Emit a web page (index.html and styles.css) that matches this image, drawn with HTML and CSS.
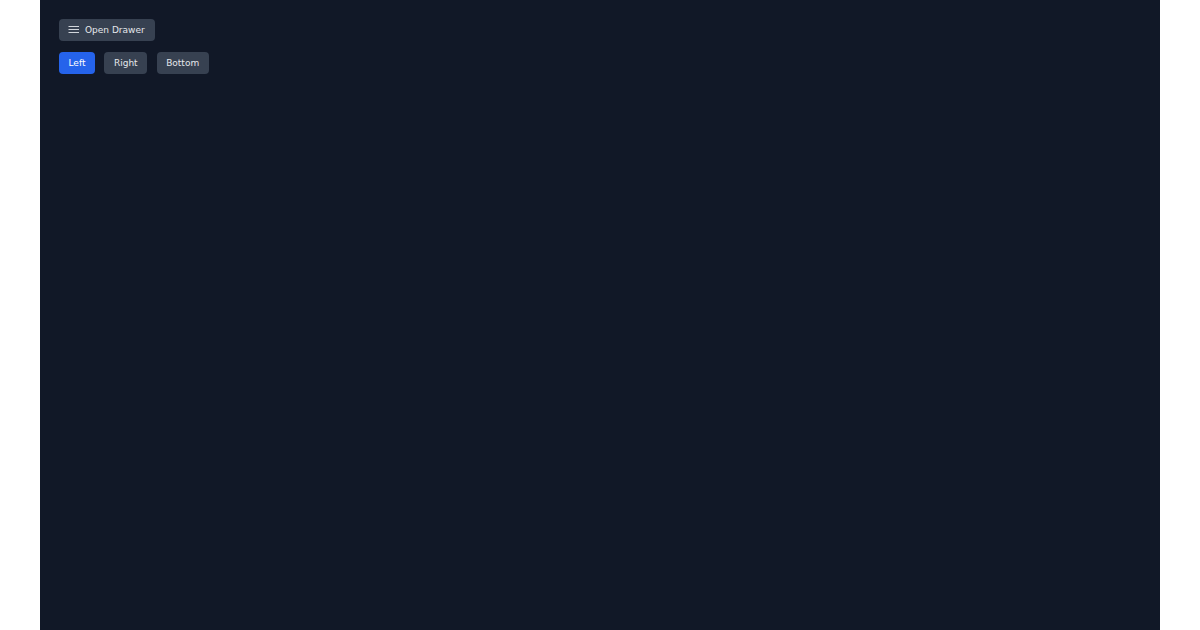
FILE: index.html
```html
<!DOCTYPE html>
<html lang="en">
<head>
<meta charset="utf-8">
<title>Drawer</title>
<link rel="stylesheet" href="styles.css">
</head>
<body>
<main class="app">
  <div class="toolbar">
    <button class="btn btn-open" type="button">
      <svg class="icon" width="12" height="12" viewBox="0 0 12 12" aria-hidden="true">
        <path d="M0.5 2.5H11M0.5 5.5H11M0.5 8.5H11" stroke="currentColor" stroke-width="1" fill="none"/>
      </svg>
      <span>Open Drawer</span>
    </button>
  </div>
  <div class="placements">
    <button class="btn btn-active" type="button">Left</button>
    <button class="btn" type="button">Right</button>
    <button class="btn" type="button">Bottom</button>
  </div>
</main>
</body>
</html>
```

FILE: styles.css
```css
html, body {
  margin: 0;
  padding: 0;
  height: 100%;
  background: #ffffff;
}

body {
  font-family: "DejaVu Sans", sans-serif;
}

.app {
  box-sizing: border-box;
  width: 1120px;
  height: 630px;
  margin: 0 auto;
  background: #111827;
  padding: 19px 19px;
  display: flex;
  flex-direction: column;
  gap: 11px;
}

.toolbar,
.placements {
  display: flex;
  gap: 9.5px;
}

.btn {
  box-sizing: border-box;
  height: 22px;
  padding: 0 9.5px;
  border: none;
  border-radius: 4px;
  background: #374151;
  color: #e5e7eb;
  font-family: "DejaVu Sans", sans-serif;
  font-size: 9px;
  line-height: 22px;
  display: inline-flex;
  align-items: center;
  cursor: pointer;
}

.btn-open {
  padding-left: 9px;
  padding-right: 10px;
  gap: 5px;
}

.icon {
  display: block;
  color: #d1d5db;
}

.btn-active {
  background: #2563eb;
  color: #ffffff;
}
```
